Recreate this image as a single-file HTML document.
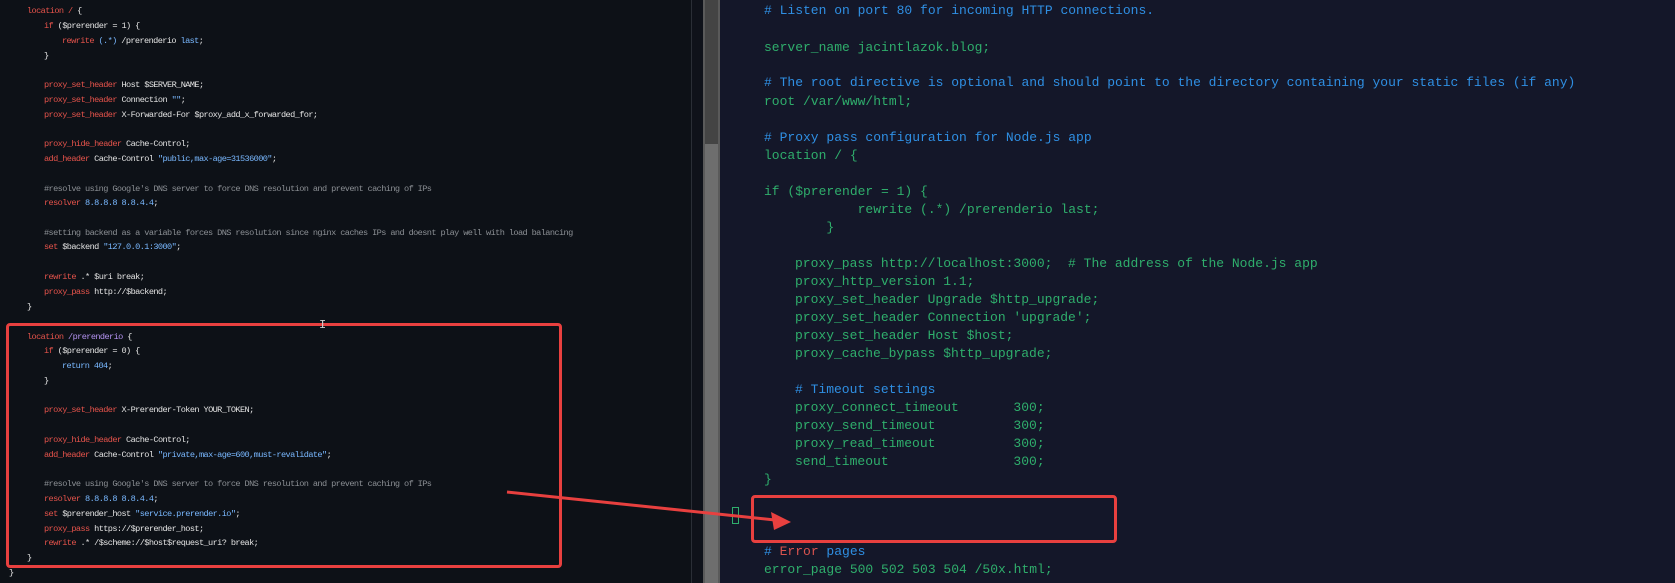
<!DOCTYPE html>
<html><head><meta charset="utf-8"><style>
html,body{margin:0;padding:0;}
body{width:1675px;height:583px;position:relative;overflow:hidden;background:#0d1117;}
.l{position:absolute;white-space:pre;font-family:"Liberation Mono","DejaVu Sans Mono",monospace;}
.L{font-size:8.6px;letter-spacing:-0.6px;color:#e3e3e3;line-height:10px;}
.R{font-size:13px;color:#2fae6c;line-height:16px;}
.k{color:#e5534b}.s{color:#79b8ff}.c{color:#8b8f94}.p{color:#b392f0}
.b{color:#2f8fe3}.e{color:#d9534f}
</style></head><body>
<div style="position:absolute;left:691px;top:0;width:1px;height:583px;background:#2a2e36"></div>
<div style="position:absolute;left:692px;top:0;width:11px;height:583px;background:#0f121a"></div>
<div style="position:absolute;left:703px;top:0;width:17px;height:583px;background:#5a5a5a"></div>
<div style="position:absolute;left:705px;top:0;width:13px;height:144px;background:#444"></div>
<div style="position:absolute;left:705px;top:144px;width:13px;height:439px;background:#6e6e6e"></div>
<div style="position:absolute;left:720px;top:0;width:955px;height:583px;background:#141729"></div>

<div class="l L" style="left:27px;top:6px"><span class="k">location</span> <span class="k">/</span> {</div>
<div class="l L" style="left:44px;top:21px"><span class="k">if</span> ($prerender = 1) {</div>
<div class="l L" style="left:62px;top:36px"><span class="k">rewrite</span> <span class="s">(.*)</span> /prerenderio <span class="s">last</span>;</div>
<div class="l L" style="left:44px;top:51px">}</div>
<div class="l L" style="left:44px;top:80px"><span class="k">proxy_set_header</span> Host $SERVER_NAME;</div>
<div class="l L" style="left:44px;top:95px"><span class="k">proxy_set_header</span> Connection <span class="s">""</span>;</div>
<div class="l L" style="left:44px;top:110px"><span class="k">proxy_set_header</span> X-Forwarded-For $proxy_add_x_forwarded_for;</div>
<div class="l L" style="left:44px;top:139px"><span class="k">proxy_hide_header</span> Cache-Control;</div>
<div class="l L" style="left:44px;top:154px"><span class="k">add_header</span> Cache-Control <span class="s">"public,max-age=31536000"</span>;</div>
<div class="l L c" style="left:44px;top:184px">#resolve using Google's DNS server to force DNS resolution and prevent caching of IPs</div>
<div class="l L" style="left:44px;top:198px"><span class="k">resolver</span> <span class="s">8.8.8.8 8.8.4.4</span>;</div>
<div class="l L c" style="left:44px;top:228px">#setting backend as a variable forces DNS resolution since nginx caches IPs and doesnt play well with load balancing</div>
<div class="l L" style="left:44px;top:242px"><span class="k">set</span> $backend <span class="s">"127.0.0.1:3000"</span>;</div>
<div class="l L" style="left:44px;top:272px"><span class="k">rewrite</span> .* $uri break;</div>
<div class="l L" style="left:44px;top:287px"><span class="k">proxy_pass</span> http://$backend;</div>
<div class="l L" style="left:27px;top:302px">}</div>
<div class="l L" style="left:27px;top:332px"><span class="k">location</span> <span class="p">/prerenderio</span> {</div>
<div class="l L" style="left:44px;top:346px"><span class="k">if</span> ($prerender = 0) {</div>
<div class="l L" style="left:62px;top:361px"><span class="s">return</span> <span class="s">404</span>;</div>
<div class="l L" style="left:44px;top:376px">}</div>
<div class="l L" style="left:44px;top:405px"><span class="k">proxy_set_header</span> X-Prerender-Token YOUR_TOKEN;</div>
<div class="l L" style="left:44px;top:435px"><span class="k">proxy_hide_header</span> Cache-Control;</div>
<div class="l L" style="left:44px;top:450px"><span class="k">add_header</span> Cache-Control <span class="s">"private,max-age=600,must-revalidate"</span>;</div>
<div class="l L c" style="left:44px;top:479px">#resolve using Google's DNS server to force DNS resolution and prevent caching of IPs</div>
<div class="l L" style="left:44px;top:494px"><span class="k">resolver</span> <span class="s">8.8.8.8 8.8.4.4</span>;</div>
<div class="l L" style="left:44px;top:509px"><span class="k">set</span> $prerender_host <span class="s">"service.prerender.io"</span>;</div>
<div class="l L" style="left:44px;top:524px"><span class="k">proxy_pass</span> https://$prerender_host;</div>
<div class="l L" style="left:44px;top:538px"><span class="k">rewrite</span> .* /$scheme://$host$request_uri? break;</div>
<div class="l L" style="left:27px;top:553px">}</div>
<div class="l L" style="left:9px;top:568px">}</div>

<div style="position:absolute;left:6px;top:323px;width:550px;height:239px;border:3px solid #e8403f;border-radius:4px"></div>
<div class="l" style="left:319px;top:318px;color:#ccc;font:12px 'Liberation Mono',monospace">I</div>

<div class="l R b" style="left:764px;top:3px"># Listen on port 80 for incoming HTTP connections.</div>
<div class="l R" style="left:764px;top:40px">server_name jacintlazok.blog;</div>
<div class="l R b" style="left:764px;top:75px"># The root directive is optional and should point to the directory containing your static files (if any)</div>
<div class="l R" style="left:764px;top:94px">root /var/www/html;</div>
<div class="l R b" style="left:764px;top:130px"># Proxy pass configuration for Node.js app</div>
<div class="l R" style="left:764px;top:148px">location / {</div>
<div class="l R" style="left:764px;top:184px">if ($prerender = 1) {</div>
<div class="l R" style="left:764px;top:202px">            rewrite (.*) /prerenderio last;</div>
<div class="l R" style="left:764px;top:220px">        }</div>
<div class="l R" style="left:795px;top:256px">proxy_pass http://localhost:3000;  # The address of the Node.js app</div>
<div class="l R" style="left:795px;top:274px">proxy_http_version 1.1;</div>
<div class="l R" style="left:795px;top:292px">proxy_set_header Upgrade $http_upgrade;</div>
<div class="l R" style="left:795px;top:310px">proxy_set_header Connection 'upgrade';</div>
<div class="l R" style="left:795px;top:328px">proxy_set_header Host $host;</div>
<div class="l R" style="left:795px;top:346px">proxy_cache_bypass $http_upgrade;</div>
<div class="l R b" style="left:795px;top:382px"># Timeout settings</div>
<div class="l R" style="left:795px;top:400px">proxy_connect_timeout       300;</div>
<div class="l R" style="left:795px;top:418px">proxy_send_timeout          300;</div>
<div class="l R" style="left:795px;top:436px">proxy_read_timeout          300;</div>
<div class="l R" style="left:795px;top:454px">send_timeout                300;</div>
<div class="l R" style="left:764px;top:472px">}</div>
<div class="l R b" style="left:764px;top:544px"># <span class="e">Error</span> pages</div>
<div class="l R" style="left:764px;top:562px">error_page 500 502 503 504 /50x.html;</div>

<div style="position:absolute;left:732px;top:507px;width:5px;height:15px;border:1px solid #2fae6c"></div>
<div style="position:absolute;left:751px;top:495px;width:360px;height:42px;border:3px solid #e8403f;border-radius:4px"></div>

<svg style="position:absolute;left:0;top:0" width="1675" height="583">
<line x1="507" y1="492" x2="775" y2="520" stroke="#e8403f" stroke-width="3"/>
<polygon points="791,522 771,512 774,530" fill="#e8403f"/>
</svg>
</body></html>
